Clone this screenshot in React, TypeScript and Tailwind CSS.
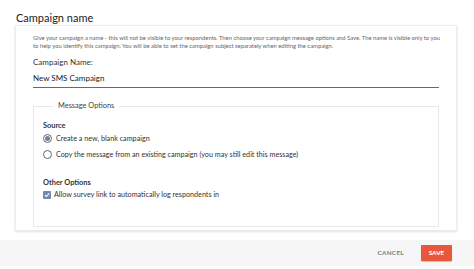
import React from "react";

export default function App() {
  return (
    <div className="w-[474px] h-[269px] bg-white overflow-hidden flex flex-col" style={{ fontFamily: "Lato, 'Noto Sans', sans-serif" }}>
      <div className="pl-[16px] pt-[11px] h-[25px] text-[11px] leading-[13px] text-[#222]">Campaign name</div>
      <div className="ml-[15px] w-[442px] h-[206px] bg-white border border-[#ececec] shadow-[0_1px_2px_rgba(0,0,0,0.12)] px-[17px] pt-[8px]">
        <p className="text-[5.85px] leading-[8px] text-[#666] whitespace-nowrap">
          Give your campaign a name - this will not be visible to your respondents. Then choose your campaign message options and Save. The name is visible only to you
          <br />
          to help you identify this campaign. You will be able to set the campaign subject separately when editing the campaign.
        </p>
        <div className="mt-[7px] text-[8px] leading-[10px] text-[#333]">Campaign Name:</div>
        <div className="mt-[6px] h-[15px] border-b border-[#5b5fbf] text-[8px] leading-[10px] text-[#222]">New SMS Campaign</div>
        <fieldset className="mt-[13px] h-[126px] border border-[#e8e8e8] pl-[9px] pr-[10px] pt-[4px]">
          <legend className="ml-[10px] px-[5px] text-[7.4px] leading-[10px] text-[#444]">Message Options</legend>
          <div className="mt-[6px] text-[7.4px] leading-[10px] font-bold text-[#333]">Source</div>
          <div className="mt-0 flex items-center h-[15px]">
            <span className="w-[9px] h-[9px] rounded-full border border-[#666] flex items-center justify-center">
              <span className="w-[5px] h-[5px] rounded-full bg-[#6e7ea6]" />
            </span>
            <span className="ml-[4px] text-[7.2px] leading-[10px] text-[#333]">Create a new, blank campaign</span>
          </div>
          <div className="mt-[1px] flex items-center h-[15px]">
            <span className="w-[9px] h-[9px] rounded-full border border-[#666]" />
            <span className="ml-[4px] text-[7.2px] leading-[10px] text-[#333]">Copy the message from an existing campaign (you may still edit this message)</span>
          </div>
          <div className="mt-[16px] text-[7.4px] leading-[10px] font-bold text-[#333]">Other Options</div>
          <div className="mt-[1px] flex items-center h-[12px]">
            <span className="w-[8px] h-[8px] rounded-[1px] bg-[#7388ad] flex items-center justify-center">
              <svg width="6" height="6" viewBox="0 0 10 10"><path d="M1.5 5.2 L4 7.6 L8.6 2.4" fill="none" stroke="white" strokeWidth="1.8" /></svg>
            </span>
            <span className="ml-[3px] text-[7.2px] leading-[10px] text-[#333]">Allow survey link to automatically log respondents in</span>
          </div>
        </fieldset>
      </div>
      <div className="mt-[9px] h-[26px] bg-[#f6f6f6] flex items-center justify-end pr-[22px]">
        <span className="text-[6.4px] font-bold tracking-[0.3px] text-[#7a7a7a] mr-[17px]">CANCEL</span>
        <span className="w-[31px] h-[16px] bg-[#e8573b] rounded-[1px] flex items-center justify-center text-[6.4px] font-bold text-white shadow-[0_1px_1px_rgba(0,0,0,0.2)]">SAVE</span>
      </div>
    </div>
  );
}
